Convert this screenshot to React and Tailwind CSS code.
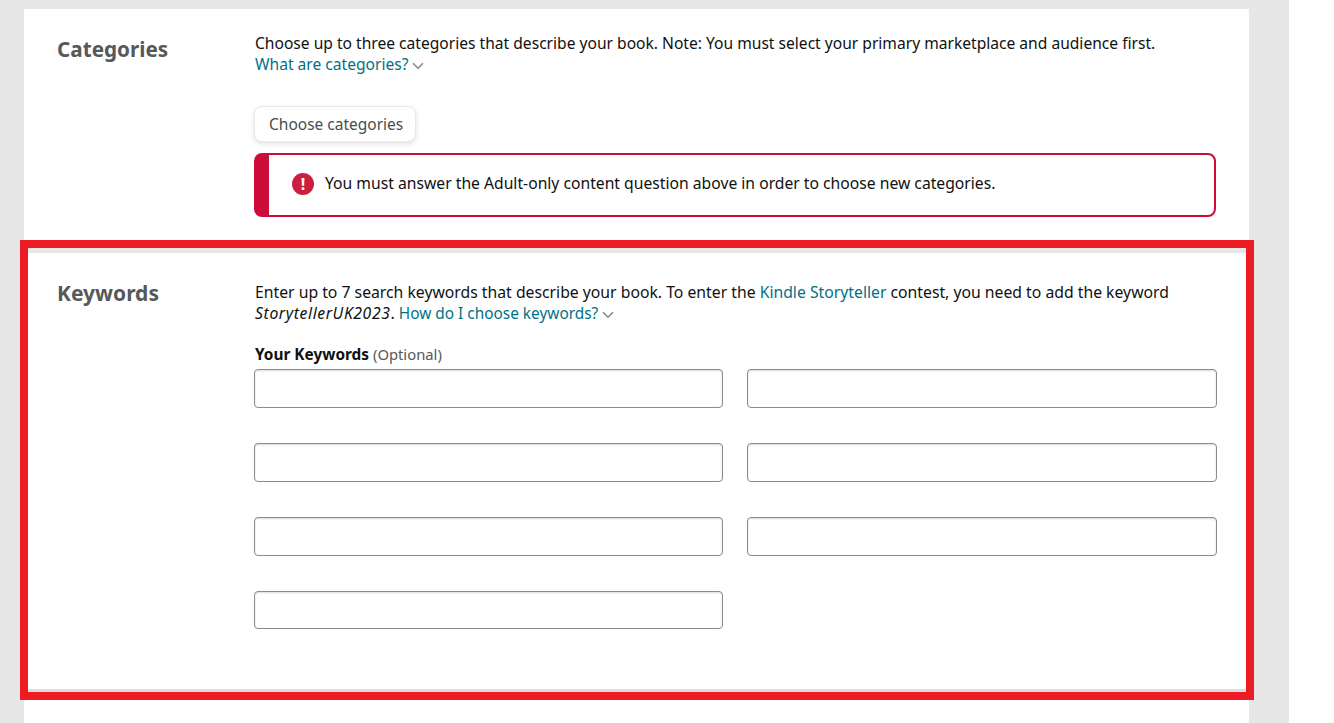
import { ChevronDown } from 'lucide-react';

const font = "font-['Noto_Sans','Open_Sans',sans-serif]";

function MoreLink({ children, className = '' }) {
  return (
    <span className={`text-[#007185] ${className}`}>
      {children}
      <ChevronDown className="inline-block ml-[1px] -my-[4px] align-middle text-[#888c8c]" size={18} strokeWidth={2.2} />
    </span>
  );
}

function KeywordInput({ last }) {
  return (
    <input
      type="text"
      className={`block w-full ${last ? 'h-[38px]' : 'h-[39px]'} bg-white border border-[#888c8c] rounded-[4px] shadow-[inset_0_1px_2px_rgba(15,17,17,0.15)] outline-none`}
    />
  );
}

export default function App() {
  return (
    <div className={`relative w-[1334px] h-[723px] overflow-hidden bg-white ${font}`}>
      <div className="w-[1289px] h-[723px] bg-[#e7e7e7] pl-[24px] pr-[40px] pt-[9px]">
        <div className="bg-white h-[714px]">
          {/* Categories */}
          <section className="flex h-[244px] border-b-[5px] border-[#e7e7e7] pl-[33px] pr-[33px] pt-[23px]">
            <h2 className="w-[197px] shrink-0 text-[20.7px] leading-[34px] font-bold text-[#565959]">Categories</h2>
            <div className="flex-1 pt-[1px] text-[15.6px] leading-[21px] text-[#0f1111]">
              <p className="pl-[1px]">Choose up to three categories that describe your book. Note: You must select your primary marketplace and audience first.</p>
              <div className="pl-[1px]">
                <MoreLink>What are categories?</MoreLink>
              </div>
              <button className="block mt-[31px] h-[36px] pl-[14px] pr-[12px] bg-white rounded-[8px] border border-[#e7e9ec] shadow-[0_2px_5px_rgba(15,17,17,0.12)] text-[15.5px] text-[#494d4d]">
                Choose categories
              </button>
              <div className="mt-[11px] h-[64px] flex items-center rounded-[8px] border-2 border-[#cc0c39] border-l-[15px] pl-[23px] pb-[2px]">
                <span className="w-[22px] h-[22px] rounded-full bg-[#cc1f3f] text-white text-[16px] leading-[22px] font-bold text-center mr-[11px]">!</span>
                <span className="text-[15.7px] -mt-[2px]">You must answer the Adult-only content question above in order to choose new categories.</span>
              </div>
            </div>
          </section>

          {/* Keywords */}
          <section className="flex h-[439px] border-b-[3px] border-[#dcdcdc] pl-[33px] pr-[32px] pt-[23px]">
            <h2 className="w-[197px] shrink-0 text-[21px] leading-[34px] font-bold text-[#565959]">Keywords</h2>
            <div className="flex-1 pt-[6px] text-[15.75px] leading-[21px] text-[#0f1111]">
              <p className="pl-[1px]">
                Enter up to 7 search keywords that describe your book. To enter the <span className="text-[#007185]">Kindle Storyteller</span> contest, you need to add the keyword
                <br />
                <em className="tracking-[0.6px]">StorytellerUK2023</em>. <MoreLink className="text-[15.4px]">How do I choose keywords?</MoreLink>
              </p>
              <p className="mt-[20px] pl-[1px] text-[14.8px] leading-[21px]">
                <span className="font-bold text-[15.4px]">Your Keywords</span> <span className="text-[#565959]">(Optional)</span>
              </p>
              <div className="mt-[4px] grid grid-cols-[469px_470px] gap-x-[24px] gap-y-[35px]">
                <KeywordInput />
                <KeywordInput />
                <KeywordInput />
                <KeywordInput />
                <KeywordInput />
                <KeywordInput />
                <KeywordInput last />
              </div>
            </div>
          </section>
        </div>
      </div>

      {/* red annotation box */}
      <div className="absolute left-[20px] top-[240px] w-[1234px] h-[460px] border-[8px] border-[#ed1c24]" />
    </div>
  );
}
